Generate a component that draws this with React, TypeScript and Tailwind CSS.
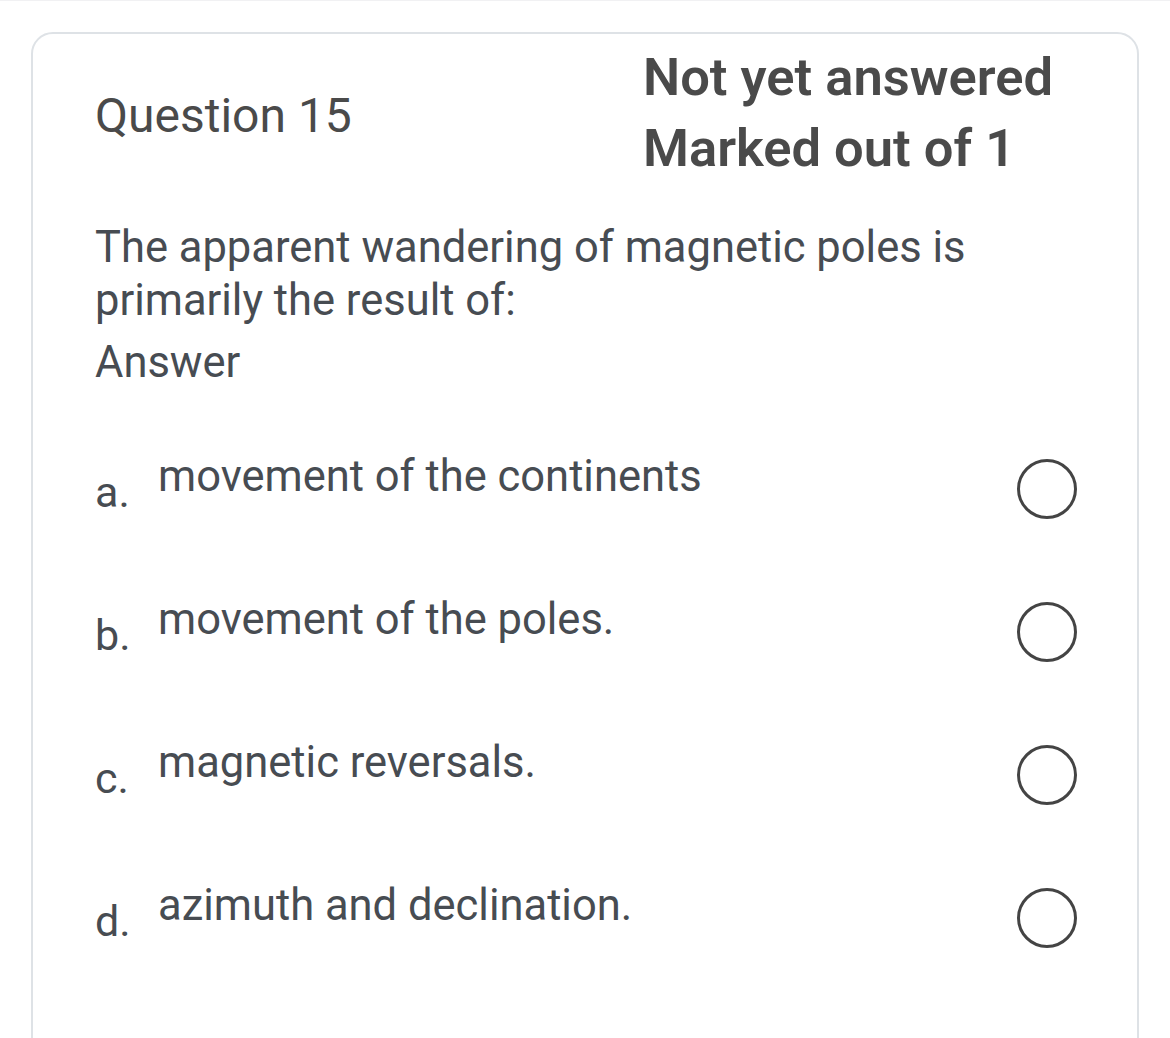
import React from "react";

const options = [
  { letter: "a.", text: "movement of the continents" },
  { letter: "b.", text: "movement of the poles." },
  { letter: "c.", text: "magnetic reversals." },
  { letter: "d.", text: "azimuth and declination." },
];

const App: React.FC = () => {
  return (
    <div
      className="min-h-screen bg-white overflow-hidden border-t border-[#f1f1f3]"
      style={{ fontFamily: "Roboto, 'Liberation Sans', sans-serif" }}
    >
      <div className="ml-[31px] mr-[31px] mt-[31px] h-[1100px] border-2 border-[#dee2e6] rounded-[22px] pl-[62px] pr-[60px]">
        {/* header */}
        <div className="flex">
          <div className="w-[548px] pt-[54px] text-[48px] leading-[56px] text-[#4a4a4a]">
            Question 15
          </div>
          <div className="pt-[8px] font-semibold text-[#4a4a4a] text-[52.5px] leading-[71px]">
            <div>Not yet answered</div>
            <div>Marked out of 1</div>
          </div>
        </div>

        {/* question */}
        <div className="mt-[37px] text-[43.5px] leading-[53px] text-[#474c52]">
          <p>The apparent wandering of magnetic poles is primarily the result of:</p>
          <p className="mt-[9px]">Answer</p>
        </div>

        {/* options */}
        <div className="mt-[53px] flex flex-col">
          {options.map((o) => (
            <div key={o.letter} className="flex items-start h-[143px]">
              <span className="w-[63px] pt-[24px] text-[43px] leading-[53px] text-[#474c52]">{o.letter}</span>
              <span className="flex-1 pt-[8px] text-[43.5px] leading-[53px] text-[#474c52]">{o.text}</span>
              <span className="mt-[17px] w-[60px] h-[60px] rounded-full border-[3px] border-[#444] shrink-0" />
            </div>
          ))}
        </div>
      </div>
    </div>
  );
};

export default App;
